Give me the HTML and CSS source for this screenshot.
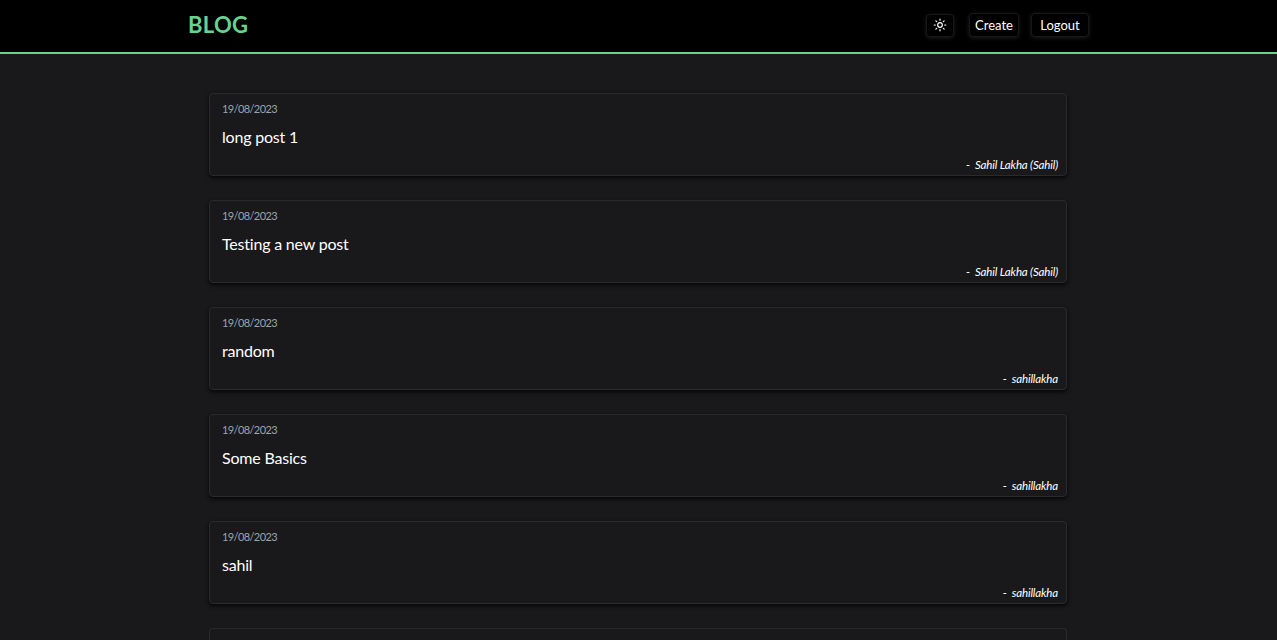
FILE: index.html
```html
<!DOCTYPE html>
<html>
<head>
  <meta charset="UTF-8" />
  <title>Blog</title>
  <link rel="stylesheet" href="styles.css">
</head>
<body>
  <div class="header">
    <div class="header-inner">
      <a class="logo">BLOG</a>
      <div class="nav">
        <button class="btn btn-icon">
          <svg width="14" height="14" viewBox="0 0 24 24" fill="none" stroke="currentColor" stroke-width="2" stroke-linecap="round">
            <circle cx="12" cy="12" r="4"></circle>
            <path d="M12 2v2M12 20v2M4.9 4.9l1.4 1.4M17.7 17.7l1.4 1.4M2 12h2M20 12h2M6.3 17.7l-1.4 1.4M19.1 4.9l-1.4 1.4"></path>
          </svg>
        </button>
        <button class="btn btn-create">Create</button>
        <button class="btn btn-logout">Logout</button>
      </div>
    </div>
  </div>

  <div class="container">
    <div class="post">
      <div class="post-date">19/08/2023</div>
      <div class="post-title">long post 1</div>
      <div class="post-author">-&nbsp;&nbsp;Sahil Lakha (Sahil)</div>
    </div>
    <div class="post">
      <div class="post-date">19/08/2023</div>
      <div class="post-title">Testing a new post</div>
      <div class="post-author">-&nbsp;&nbsp;Sahil Lakha (Sahil)</div>
    </div>
    <div class="post">
      <div class="post-date">19/08/2023</div>
      <div class="post-title">random</div>
      <div class="post-author">-&nbsp;&nbsp;sahillakha</div>
    </div>
    <div class="post">
      <div class="post-date">19/08/2023</div>
      <div class="post-title">Some Basics</div>
      <div class="post-author">-&nbsp;&nbsp;sahillakha</div>
    </div>
    <div class="post">
      <div class="post-date">19/08/2023</div>
      <div class="post-title">sahil</div>
      <div class="post-author">-&nbsp;&nbsp;sahillakha</div>
    </div>
    <div class="post post-next"></div>
  </div>
</body>
</html>
```

FILE: styles.css
```css
:root {
  --bg-primary: #19191b;
  --bg-header: #000000;
  --text-primary: #ffffff;
  --text-muted: #9ca3af;
  --accent-color: #68d391;
  --border-color: #2a2a2c;
}

* {
  margin: 0;
  padding: 0;
  box-sizing: border-box;
}

html,
body {
  height: 640px;
  overflow: hidden;
}

body {
  font-family: Lato, sans-serif;
  background-color: var(--bg-primary);
  color: var(--text-primary);
}

.header {
  height: 54px;
  background-color: var(--bg-header);
  border-bottom: 2px solid var(--accent-color);
}

.header-inner {
  width: 901px;
  height: 52px;
  margin-left: 188px;
  padding-bottom: 2px;
  display: flex;
  align-items: center;
  justify-content: space-between;
}

.logo {
  font-size: 22px;
  line-height: 24px;
  font-weight: 700;
  letter-spacing: 0.3px;
  color: var(--accent-color);
}

.nav {
  display: flex;
  align-items: center;
  gap: 12px;
}

.btn {
  height: 24px;
  padding-bottom: 1px;
  font-family: inherit;
  font-size: 13px;
  color: var(--text-primary);
  background-color: var(--bg-header);
  border: 1px solid #18181b;
  border-radius: 4px;
  box-shadow: 0 1px 4px rgba(255, 255, 255, 0.12);
}

.btn-create {
  width: 50px;
}

.btn-logout {
  width: 58px;
}

.btn-icon {
  width: 28px;
  height: 23px;
  margin-right: 3px;
  padding: 0;
  display: flex;
  align-items: center;
  justify-content: center;
}

.container {
  width: 858px;
  margin: 39px 0 0 209px;
  display: flex;
  flex-direction: column;
  gap: 24px;
}

.post {
  height: 83px;
  flex-shrink: 0;
  padding: 8px 8px 0 12px;
  border: 1px solid var(--border-color);
  border-radius: 4px;
  background-color: var(--bg-primary);
  box-shadow: 0 2px 4px rgba(0, 0, 0, 0.8);
}

.post-next {
  height: 12px;
  border-bottom: none;
  border-radius: 4px 4px 0 0;
  box-shadow: none;
}

.post-date {
  font-size: 11px;
  line-height: 14px;
  letter-spacing: -0.6px;
  color: var(--text-muted);
}

.post-title {
  margin-top: 9px;
  font-size: 16px;
  line-height: 24px;
  letter-spacing: -0.2px;
}

.post-author {
  margin-top: 8px;
  font-size: 11.5px;
  line-height: 15px;
  letter-spacing: -0.15px;
  font-style: italic;
  text-align: right;
}
```
